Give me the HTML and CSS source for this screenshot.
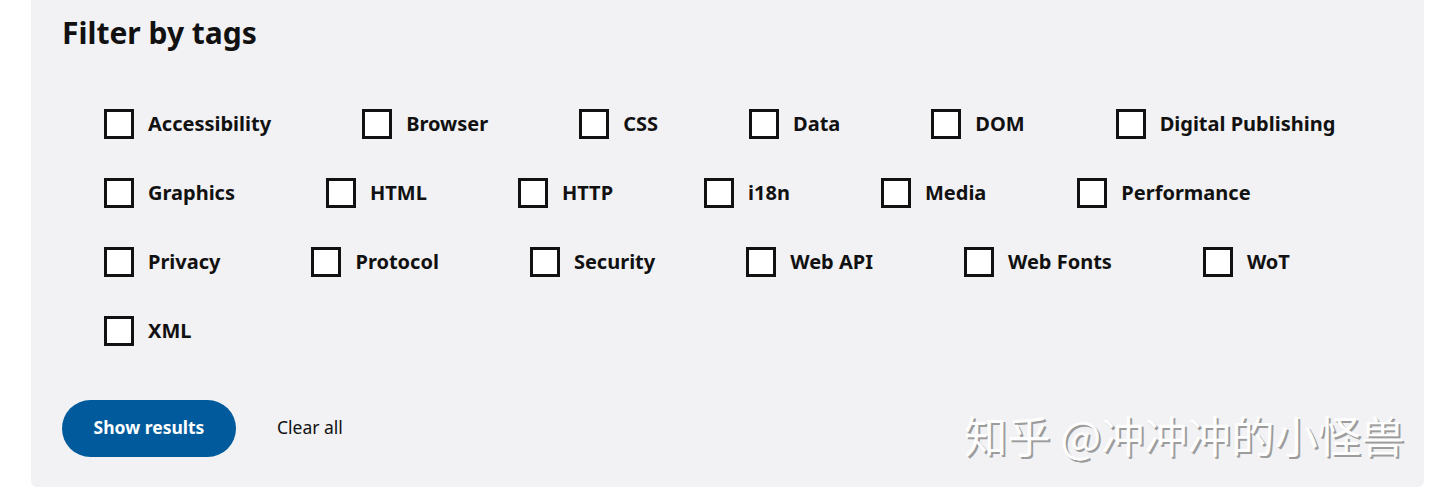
FILE: index.html
```html
<!DOCTYPE html>
<html lang="en">
<head>
<meta charset="utf-8">
<title>Filter by tags</title>
<link rel="stylesheet" href="styles.css">
</head>
<body>
<form class="panel">
  <h2 class="title">Filter by tags</h2>
  <fieldset class="tags">
    <label class="tag"><input type="checkbox" class="box"><span class="tag-name">Accessibility</span></label>
    <label class="tag"><input type="checkbox" class="box"><span class="tag-name">Browser</span></label>
    <label class="tag"><input type="checkbox" class="box"><span class="tag-name">CSS</span></label>
    <label class="tag"><input type="checkbox" class="box"><span class="tag-name">Data</span></label>
    <label class="tag"><input type="checkbox" class="box"><span class="tag-name">DOM</span></label>
    <label class="tag"><input type="checkbox" class="box"><span class="tag-name">Digital Publishing</span></label>
    <label class="tag"><input type="checkbox" class="box"><span class="tag-name">Graphics</span></label>
    <label class="tag"><input type="checkbox" class="box"><span class="tag-name">HTML</span></label>
    <label class="tag"><input type="checkbox" class="box"><span class="tag-name">HTTP</span></label>
    <label class="tag"><input type="checkbox" class="box"><span class="tag-name">i18n</span></label>
    <label class="tag"><input type="checkbox" class="box"><span class="tag-name">Media</span></label>
    <label class="tag"><input type="checkbox" class="box"><span class="tag-name">Performance</span></label>
    <label class="tag"><input type="checkbox" class="box"><span class="tag-name">Privacy</span></label>
    <label class="tag"><input type="checkbox" class="box"><span class="tag-name">Protocol</span></label>
    <label class="tag"><input type="checkbox" class="box"><span class="tag-name">Security</span></label>
    <label class="tag"><input type="checkbox" class="box"><span class="tag-name">Web API</span></label>
    <label class="tag"><input type="checkbox" class="box"><span class="tag-name">Web Fonts</span></label>
    <label class="tag"><input type="checkbox" class="box"><span class="tag-name">WoT</span></label>
    <label class="tag"><input type="checkbox" class="box"><span class="tag-name">XML</span></label>
  </fieldset>
  <div class="actions">
    <button type="button" class="btn">Show results</button>
    <button type="button" class="clear">Clear all</button>
  </div>
  <div class="watermark">知乎 @冲冲冲的小怪兽</div>
</form>
</body>
</html>
```
FILE: styles.css
```css
* { box-sizing: border-box; }
html, body { margin: 0; padding: 0; background: #fff; }
body {
  font-family: "Noto Sans", "Open Sans", sans-serif;
  color: #111;
}
.panel {
  position: relative;
  margin-left: 31px;
  width: 1393px;
  height: 487px;
  background: #f2f2f4;
  border-radius: 0 0 6px 6px;
  padding: 13px 31px 0 31px;
}
.title {
  margin: 0;
  font-size: 30px;
  line-height: 40px;
  font-weight: 700;
}
.tags {
  border: 0;
  margin: 56px 0 0 0;
  padding: 0 0 0 42px;
  display: flex;
  flex-wrap: wrap;
  column-gap: 91px;
  row-gap: 39px;
  max-width: 1340px;
}
.tag {
  display: flex;
  align-items: center;
  gap: 14px;
  height: 30px;
  font-size: 20px;
  font-weight: 700;
  white-space: nowrap;
}
.tag-name {
  padding-bottom: 2px;
}
.box {
  appearance: none;
  -webkit-appearance: none;
  margin: 0;
  width: 30px;
  height: 30px;
  border: 3px solid #111;
  background: #fff;
  border-radius: 0;
}
.actions {
  display: flex;
  align-items: center;
  gap: 41px;
  margin-top: 54px;
}
.btn {
  font-family: inherit;
  width: 174px;
  height: 57px;
  border: 0;
  border-radius: 29px;
  background: #005a9c;
  color: #fff;
  font-size: 17.5px;
  font-weight: 700;
  padding: 0 0 3px 0;
}
.clear {
  font-family: inherit;
  border: 0;
  background: none;
  padding: 0 0 3px 0;
  font-size: 17.5px;
  color: #111;
}
.watermark {
  position: absolute;
  left: 933px;
  top: 409px;
  font-family: "Noto Sans CJK SC", sans-serif;
  font-size: 43.3px;
  line-height: 50px;
  color: #fdfdfd;
  text-shadow: 2px 2px 0 #9c9c9c;
  white-space: nowrap;
}
```
